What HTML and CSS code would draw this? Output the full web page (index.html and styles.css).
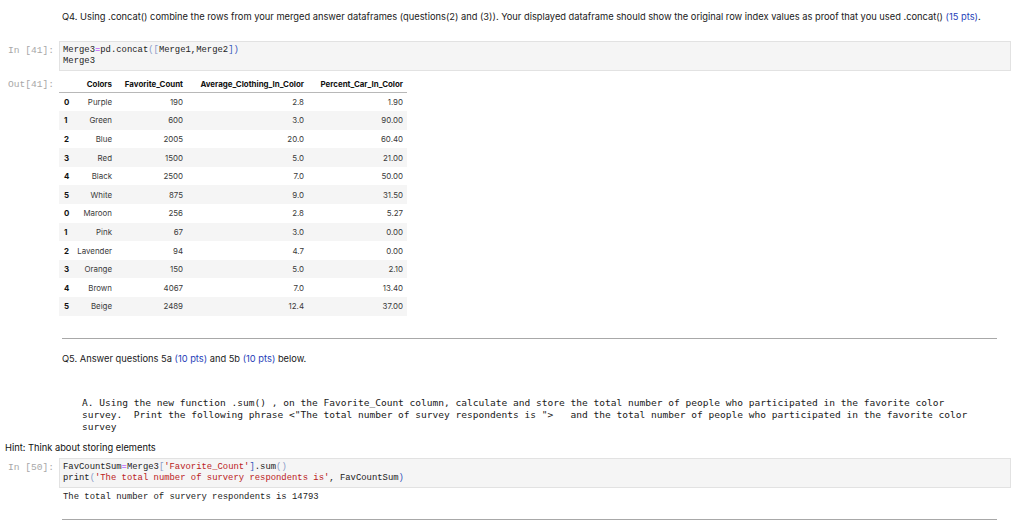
FILE: index.html
```html
<!DOCTYPE html>
<html>
<head>
<meta charset="utf-8">
<link rel="stylesheet" href="styles.css">
</head>
<body>
<div class="nb">
  <div class="cell md q4">
    <div class="prompt"></div>
    <div class="content"><p class="text">Q4. Using .concat() combine the rows from your merged answer dataframes (questions(2) and (3)). Your displayed dataframe should show the original row index values as proof that you used .concat() <span class="pts">(15 pts)</span>.</p></div>
  </div>

  <div class="cell code c41">
    <div class="prompt in">In [41]:</div>
    <div class="content"><div class="codebox"><pre>Merge3<span class="op">=</span>pd.concat<span class="br">([</span>Merge1,Merge2<span class="br2">])</span>
Merge3</pre></div></div>
  </div>

  <div class="cell out o41">
    <div class="prompt outp">Out[41]:</div>
    <div class="content">
      <table class="df">
        <colgroup><col class="w0"><col class="w1"><col class="w2"><col class="w3"><col class="w4"></colgroup>
        <thead><tr><th></th><th>Colors</th><th>Favorite_Count</th><th>Average_Clothing_In_Color</th><th>Percent_Car_In_Color</th></tr></thead>
        <tbody>
          <tr><th>0</th><td>Purple</td><td>190</td><td>2.8</td><td>1.90</td></tr>
          <tr><th>1</th><td>Green</td><td>600</td><td>3.0</td><td>90.00</td></tr>
          <tr><th>2</th><td>Blue</td><td>2005</td><td>20.0</td><td>60.40</td></tr>
          <tr><th>3</th><td>Red</td><td>1500</td><td>5.0</td><td>21.00</td></tr>
          <tr><th>4</th><td>Black</td><td>2500</td><td>7.0</td><td>50.00</td></tr>
          <tr><th>5</th><td>White</td><td>875</td><td>9.0</td><td>31.50</td></tr>
          <tr><th>0</th><td>Maroon</td><td>256</td><td>2.8</td><td>5.27</td></tr>
          <tr><th>1</th><td>Pink</td><td>67</td><td>3.0</td><td>0.00</td></tr>
          <tr><th>2</th><td>Lavender</td><td>94</td><td>4.7</td><td>0.00</td></tr>
          <tr><th>3</th><td>Orange</td><td>150</td><td>5.0</td><td>2.10</td></tr>
          <tr><th>4</th><td>Brown</td><td>4067</td><td>7.0</td><td>13.40</td></tr>
          <tr><th>5</th><td>Beige</td><td>2489</td><td>12.4</td><td>37.00</td></tr>
        </tbody>
      </table>
    </div>
  </div>

  <div class="cell md q5">
    <div class="prompt"></div>
    <div class="content">
      <hr class="rule">
      <p class="text q5t">Q5. Answer questions 5a <span class="pts">(10 pts)</span> and 5b <span class="pts">(10 pts)</span> below.</p>
      <pre class="mdpre">A. Using the new function .sum() , on the Favorite_Count column, calculate and store the total number of people who participated in the favorite color
survey.  Print the following phrase &lt;"The total number of survey respondents is "&gt;   and the total number of people who participated in the favorite color
survey</pre>
    </div>
  </div>

  <p class="hint">Hint: Think about storing elements</p>

  <div class="cell code c50">
    <div class="prompt in">In [50]:</div>
    <div class="content"><div class="codebox"><pre>FavCountSum<span class="op">=</span>Merge3<span class="br">[</span><span class="str">'Favorite_Count'</span><span class="br2">]</span>.sum<span class="br">()</span>
print<span class="br">(</span><span class="str">'The total number of survery respondents is'</span>, FavCountSum<span class="br2">)</span></pre></div></div>
  </div>

  <div class="cell out o50">
    <div class="prompt"></div>
    <div class="content"><pre class="stdout">The total number of survery respondents is 14793</pre>
      <hr class="rule end">
    </div>
  </div>
</div>
</body>
</html>
```

FILE: styles.css
```css
html, body {
  margin: 0;
  padding: 0;
  background: #ffffff;
}

body {
  font-family: Inter, "Liberation Sans", Arial, sans-serif;
  color: #111;
  overflow: hidden;
}

.nb {
  padding-top: 11px;
}

.cell {
  display: flex;
  align-items: flex-start;
}

.prompt {
  width: 59px;
  flex: none;
  box-sizing: border-box;
  padding-right: 5px;
  text-align: right;
  font-family: "Liberation Mono", "Courier New", monospace;
  font-size: 9.6px;
  color: #a8a8a8;
  white-space: pre;
}

.content {
  flex: 1;
  min-width: 0;
  margin-right: 13px;
}

.text {
  margin: 0 0 0 3px;
  font-size: 9.3px;
  line-height: 12px;
  color: #1a1a1a;
  white-space: nowrap;
}

.pts {
  color: #2540b8;
}

.c41 {
  margin-top: 18px;
}

.codebox {
  background: #f5f5f5;
  border: 1px solid #e2e2e2;
  padding: 3px 3px;
}

.codebox pre {
  margin: 0;
  font-family: "Liberation Mono", "Courier New", monospace;
  font-size: 8.9px;
  line-height: 11px;
  color: #222;
}

.in {
  padding-top: 4px;
  line-height: 11px;
}

.op { color: #aa22ff; }
.br { color: #8a9cc8; }
.br2 { color: #3355bb; }
.str { color: #ba2121; }

.o41 {
  margin-top: 5px;
}

.outp {
  line-height: 17px;
  padding-top: 0;
}

.df {
  border-collapse: collapse;
  table-layout: fixed;
  width: 348px;
  font-size: 7.9px;
  color: #3a3a3a;
}

.w0 { width: 14px; }
.w1 { width: 43px; }
.w2 { width: 71px; }
.w3 { width: 121px; }
.w4 { width: 99px; }

.df thead th {
  height: 16px;
  padding: 0 4px;
  text-align: right;
  font-weight: bold;
  color: #111;
  border-bottom: 1px solid #b8b8b8;
  white-space: nowrap;
}

.df tbody th,
.df tbody td {
  height: 18.6px;
  padding: 0 4px;
  box-sizing: border-box;
  white-space: nowrap;
}

.df tbody th {
  text-align: left;
  padding-left: 5px;
  padding-right: 0;
  font-weight: bold;
  color: #111;
}

.df tbody td {
  text-align: right;
}

.df tbody tr:nth-child(even) {
  background: #f5f5f5;
}

.q5 {
  margin-top: 22px;
}

.rule {
  margin: 0 14px 0 3px;
  border: 0;
  border-top: 1px solid #a8a8a8;
  height: 0;
}

.q5t {
  margin-top: 14px;
}

.mdpre {
  margin: 32px 0 0 23px;
  font-family: "DejaVu Sans Mono", monospace;
  font-size: 9.55px;
  line-height: 12px;
  color: #1a1a1a;
}

.hint {
  margin: 9px 0 0 5px;
  font-size: 9.3px;
  line-height: 12px;
  color: #111;
}

.c50 {
  margin-top: 4px;
}

.o50 {
  margin-top: 3px;
}

.stdout {
  margin: 0 0 0 4px;
  font-family: "Liberation Mono", "Courier New", monospace;
  font-size: 8.9px;
  line-height: 12px;
  color: #222;
}

.end {
  margin-top: 16px;
}
```
